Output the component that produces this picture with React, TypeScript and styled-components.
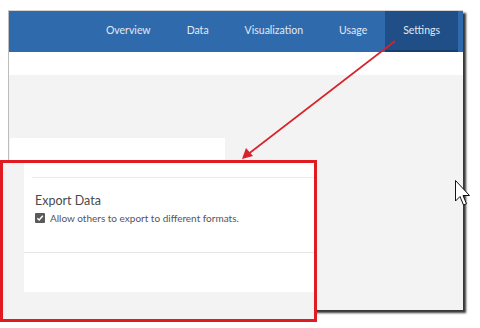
import React from "react";
import styled, { createGlobalStyle } from "styled-components";

const Global = createGlobalStyle`
  html, body { margin: 0; padding: 0; background: #ffffff; }
  body { width: 480px; height: 328px; overflow: hidden; font-family: Lato, "Open Sans", sans-serif; }
  #root { width: 480px; height: 328px; position: relative; }
`;

const Stage = styled.div`
  position: relative;
  width: 480px;
  height: 328px;
  padding: 10px 0 0 8px;
  box-sizing: border-box;
`;

const Window = styled.div`
  width: 455px;
  height: 300px;
  box-sizing: border-box;
  border-top: 1px solid #d4d4d4;
  border-left: 1px solid #bdbdbd;
  background: #f3f3f3;
  box-shadow: 3px 3px 2px rgba(20, 20, 20, 0.85);
  display: flex;
  flex-direction: column;
  overflow: hidden;
`;

const Header = styled.nav`
  height: 41px;
  background: #2f6bac;
  display: flex;
  justify-content: flex-end;
  padding-right: 5px;
  flex-shrink: 0;
`;

const Tab = styled.div<{ $active?: boolean }>`
  display: flex;
  align-items: center;
  padding: 0 18px 1px;
  font-size: 10.5px;
  color: #e1e9f3;
  background: ${(p) => (p.$active ? "#1f4f86" : "transparent")};
  border-bottom: 2px solid ${(p) => (p.$active ? "#173f6c" : "transparent")};
`;

const SubBar = styled.div`
  height: 23px;
  background: #ffffff;
  flex-shrink: 0;
`;

const Main = styled.div`
  flex: 1;
  padding: 63px 0 0 1px;
`;

const Card = styled.div`
  width: 215px;
  height: 40px;
  background: #ffffff;
`;

const Callout = styled.div`
  position: absolute;
  left: 0;
  top: 160px;
  width: 317px;
  height: 162px;
  box-sizing: border-box;
  border: 3px solid #e11b22;
  background: #f3f3f3;
  padding-left: 21px;
  display: flex;
  align-items: flex-start;
`;

const ZoomCard = styled.div`
  flex: 1;
  height: 129px;
  background: #ffffff;
  display: flex;
  flex-direction: column;
`;

const TopRule = styled.div`
  height: 14px;
  margin-left: 8px;
  border-bottom: 1px solid #ececec;
`;

const Section = styled.div`
  height: 75px;
  padding: 15px 0 0 11px;
  box-sizing: border-box;
  border-bottom: 1px solid #e6e6e6;
  display: flex;
  flex-direction: column;
  gap: 4px;
`;

const SectionTitle = styled.div`
  font-size: 12.5px;
  color: #4a4a4a;
`;

const CheckRow = styled.div`
  display: flex;
  align-items: center;
  gap: 5px;
  font-size: 10px;
  color: #555555;
`;

const Box = styled.span`
  width: 10px;
  height: 10px;
  background: #5a5a5a;
  border-radius: 1px;
  display: inline-flex;
  align-items: center;
  justify-content: center;
`;

const Overlay = styled.svg`
  position: absolute;
  left: 0;
  top: 0;
  pointer-events: none;
`;

const tabs = ["Overview", "Data", "Visualization", "Usage", "Settings"];

export default function App() {
  return (
    <>
      <Global />
      <Stage>
        <Window>
          <Header>
            {tabs.map((t) => (
              <Tab key={t} $active={t === "Settings"}>
                {t}
              </Tab>
            ))}
          </Header>
          <SubBar />
          <Main>
            <Card />
          </Main>
        </Window>
        <Callout>
          <ZoomCard>
            <TopRule />
            <Section>
              <SectionTitle>Export Data</SectionTitle>
              <CheckRow>
                <Box>
                  <svg width="8" height="8" viewBox="0 0 8 8">
                    <path d="M1.3 4.2 L3.2 6 L6.8 1.8" fill="none" stroke="#fff" strokeWidth="1.5" />
                  </svg>
                </Box>
                Allow others to export to different formats.
              </CheckRow>
            </Section>
          </ZoomCard>
        </Callout>
        <Overlay width="480" height="328" viewBox="0 0 480 328">
          <line x1="395" y1="41" x2="247" y2="155" stroke="#d8232a" strokeWidth="1.6" />
          <path d="M242 159 L246 148 L253 156 Z" fill="#d8232a" />
          <path
            d="M455.5 180.5 L455.5 201 L460 196.5 L463.5 205 L466.5 203.8 L463 195.5 L469.5 195.5 Z"
            fill="#ffffff"
            stroke="#111"
            strokeWidth="1"
            strokeLinejoin="round"
          />
        </Overlay>
      </Stage>
    </>
  );
}
